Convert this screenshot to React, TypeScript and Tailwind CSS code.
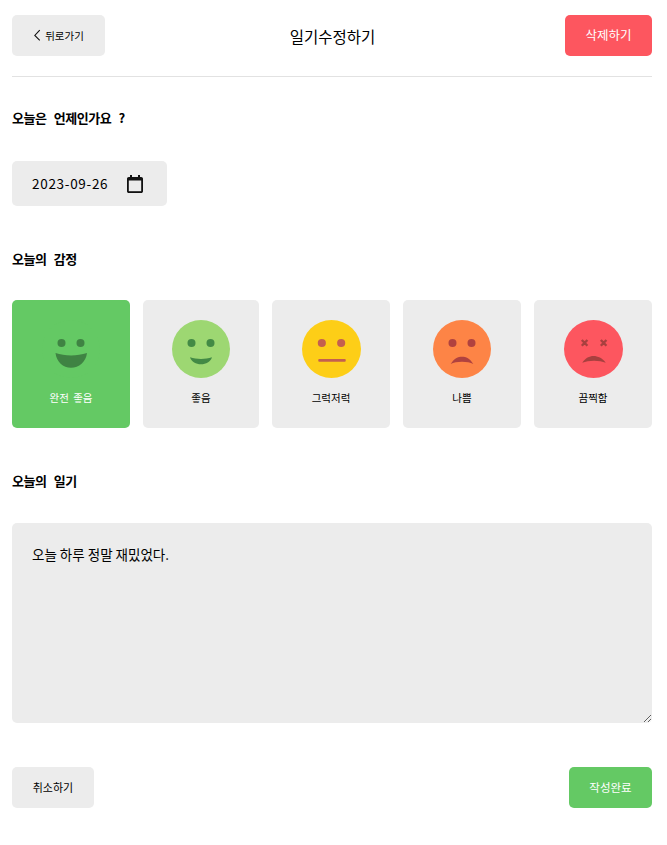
const FONT = "font-['Noto_Sans_CJK_KR','Noto_Sans',sans-serif]";

function Face({ bg, fg, wide, children }: { bg: string; fg: string; wide?: boolean; children: React.ReactNode }) {
  return (
    <svg
      viewBox="0 0 58 58"
      preserveAspectRatio="none"
      className={wide ? "w-[59px] h-[58px]" : "w-[58px] h-[58px]"}
      fill={fg}
    >
      <circle cx="29" cy="29" r="29" fill={bg} />
      {children}
    </svg>
  );
}

const Eyes = () => (
  <>
    <circle cx="19.5" cy="23" r="4" />
    <circle cx="38.5" cy="23" r="4" />
  </>
);

const emotions = [
  {
    label: "완전 좋음",
    face: (
      <Face bg="#64c964" fg="#3f8343">
        <Eyes />
        <path d="M13.5 33 C23 36.2 35 36.2 45 33 C44 42 37 47.7 29 47.7 C21 47.7 14.5 42 13.5 33 Z" />
      </Face>
    ),
  },
  {
    label: "좋음",
    face: (
      <Face bg="#9dd772" fg="#438a45">
        <Eyes />
        <path d="M18 37.3 C25 39.6 33 39.6 40 37.3 C38.5 42 34 44.3 29 44.3 C24 44.3 19.5 42 18 37.3 Z" />
      </Face>
    ),
  },
  {
    label: "그럭저럭",
    face: (
      <Face bg="#fdce17" fg="#c4604f" wide>
        <Eyes />
        <rect x="16" y="39" width="27" height="2.7" rx="1" />
      </Face>
    ),
  },
  {
    label: "나쁨",
    face: (
      <Face bg="#fd8446" fg="#b0423f">
        <Eyes />
        <path d="M17.7 44 C21 38.5 25 36.7 29 36.7 C33 36.7 37 38.5 40.3 44 C35 41 23 41 17.7 44 Z" />
      </Face>
    ),
  },
  {
    label: "끔찍함",
    face: (
      <Face bg="#fd565f" fg="#a8403f" wide>
        <path d="M17.5 20 L23 25.8 M23 20 L17.5 25.8 M36.2 20 L41.7 25.8 M41.7 20 L36.2 25.8" stroke="#a8403f" strokeWidth="2.3" fill="none" />
        <path d="M18 42.7 C21 38 25 36 29 36 C33 36 38 38 41 42.7 C35 40 24 40 18 42.7 Z" />
      </Face>
    ),
  },
];

function Title({ children }: { children: React.ReactNode }) {
  return <h4 className="text-[13px] leading-[20px] font-bold text-black tracking-[-0.5px] [word-spacing:5px]">{children}</h4>;
}

export default function App() {
  return (
    <div className={`${FONT} w-[652px] pl-3 text-black bg-white min-h-[845px]`}>
      <header className="flex items-center justify-between h-[77px] pt-[15px] pb-[20px] border-b border-[#e2e2e2]">
        <button className="w-[93px] h-[41px] rounded-[5px] bg-[#ececec] text-[10.5px] flex items-center justify-center gap-[3px]">
          <svg viewBox="0 0 10 14" className="w-[9px] h-[13px]" fill="none" stroke="#111" strokeWidth="1.2">
            <path d="M7.5 1 L2 7 L7.5 12.5" />
          </svg>
          <span>뒤로가기</span>
        </button>
        <div className="text-[15.5px] leading-[20px] mr-[5px]">일기수정하기</div>
        <button className="w-[87px] h-[41px] rounded-[5px] bg-[#fd565f] text-white text-[12.5px]">삭제하기</button>
      </header>

      <section className="pt-[31px]">
        <Title>오늘은 언제인가요 ?</Title>
        <div className="mt-[33px] w-[155px] h-[45px] rounded-[5px] bg-[#ececec] flex items-center pl-[20px] gap-[19px]">
          <span className="text-[13.5px] w-[76px] tracking-[0.7px] whitespace-nowrap">2023-09-26</span>
          <svg viewBox="0 0 16 18" className="w-[16px] h-[18px]">
            <path d="M3 0h2v2h6V0h2v2h1.2c1 0 1.8.8 1.8 1.8v12.4c0 1-.8 1.8-1.8 1.8H1.8C.8 18 0 17.2 0 16.2V3.8C0 2.8.8 2 1.8 2H3z" fill="#111" />
            <rect x="1.8" y="5.5" width="12.4" height="10.7" fill="#ececec" />
          </svg>
        </div>
      </section>

      <section className="pt-[43px]">
        <Title>오늘의 감정</Title>
        <div className="mt-[31px] grid grid-cols-[118px_116px_118px_118px_118px] gap-x-[13px]">
          {emotions.map((e, i) => (
            <div
              key={e.label}
              className={`h-[128px] rounded-[5px] flex flex-col items-center pt-[20px] ${
                i === 0 ? "bg-[#64c964] text-white" : "bg-[#ececec] text-black"
              }`}
            >
              {e.face}
              <span className="mt-[12px] text-[10.5px] leading-[16px] [word-spacing:2px]">{e.label}</span>
            </div>
          ))}
        </div>
      </section>

      <section className="pt-[43px]">
        <Title>오늘의 일기</Title>
        <textarea
          defaultValue="오늘 하루 정말 재밌었다."
          className="block mt-[32px] w-full h-[200px] rounded-[5px] bg-[#ececec] px-[20px] py-[20px] text-[13.5px] leading-[22px] outline-none resize-y"
        />
      </section>

      <footer className="mt-[44px] flex justify-between">
        <button className="w-[82px] h-[41px] rounded-[5px] bg-[#ececec] text-[11px]">취소하기</button>
        <button className="w-[83px] h-[41px] rounded-[5px] bg-[#64c964] text-white text-[11.5px]">작성완료</button>
      </footer>
    </div>
  );
}
